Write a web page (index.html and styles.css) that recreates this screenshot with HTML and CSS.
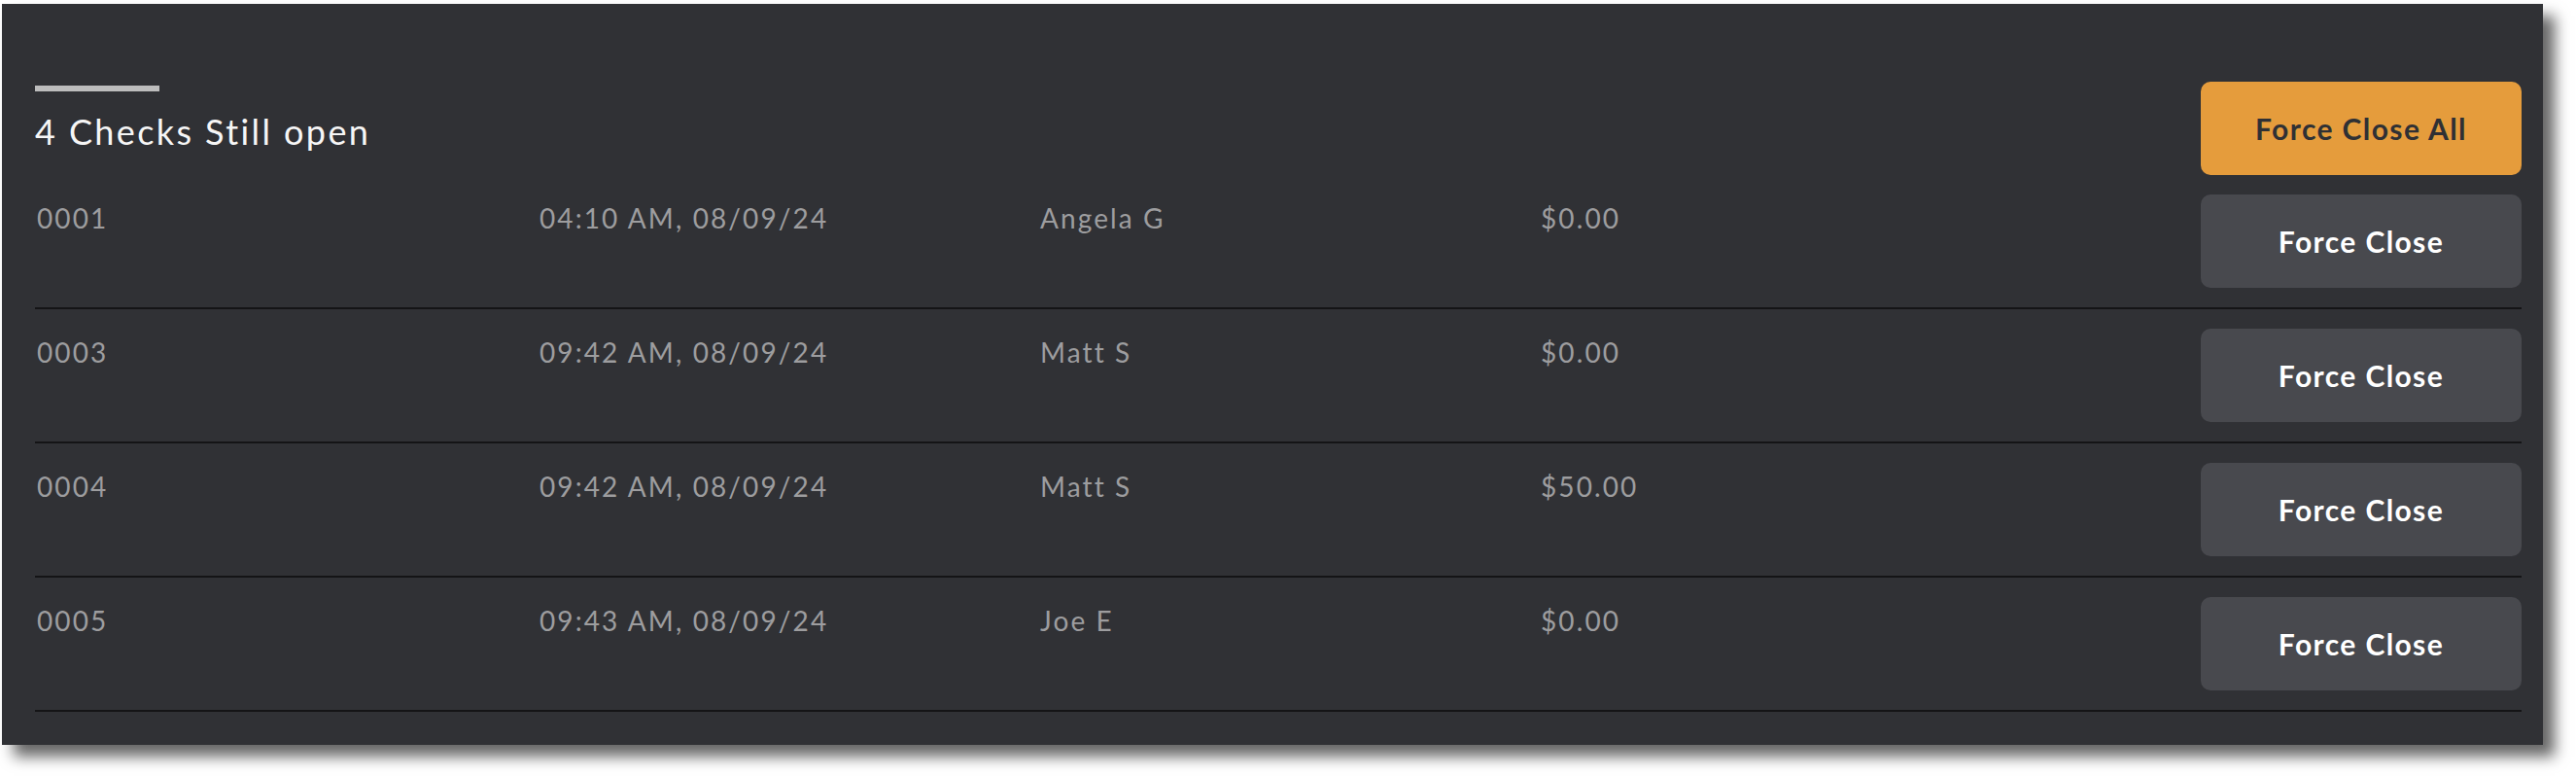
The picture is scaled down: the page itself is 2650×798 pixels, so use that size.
FILE: index.html
```html
<!DOCTYPE html>
<html lang="en">
<head>
<meta charset="utf-8">
<title>Checks Still open</title>
<link rel="stylesheet" href="styles.css">
</head>
<body>
<div class="panel">
  <div class="header">
    <div class="heading">
      <div class="grip"></div>
      <h1 class="title">4 Checks Still open</h1>
    </div>
    <button class="btn btn-primary">Force Close All</button>
  </div>
  <div class="rows">
    <div class="row">
      <span class="cell">0001</span>
      <span class="cell">04:10 AM, 08/09/24</span>
      <span class="cell">Angela G</span>
      <span class="cell">$0.00</span>
      <button class="btn btn-secondary">Force Close</button>
    </div>
    <div class="row">
      <span class="cell">0003</span>
      <span class="cell">09:42 AM, 08/09/24</span>
      <span class="cell">Matt S</span>
      <span class="cell">$0.00</span>
      <button class="btn btn-secondary">Force Close</button>
    </div>
    <div class="row">
      <span class="cell">0004</span>
      <span class="cell">09:42 AM, 08/09/24</span>
      <span class="cell">Matt S</span>
      <span class="cell">$50.00</span>
      <button class="btn btn-secondary">Force Close</button>
    </div>
    <div class="row">
      <span class="cell">0005</span>
      <span class="cell">09:43 AM, 08/09/24</span>
      <span class="cell">Joe E</span>
      <span class="cell">$0.00</span>
      <button class="btn btn-secondary">Force Close</button>
    </div>
  </div>
</div>
</body>
</html>
```
FILE: styles.css
```css
html, body {
  margin: 0;
  padding: 0;
  background: #ffffff;
}

body {
  min-height: 798px;
  font-family: "Lato", "Liberation Sans", sans-serif;
}

.panel {
  box-sizing: border-box;
  margin: 4px 0 0 2px;
  width: 2614px;
  height: 762px;
  padding: 80px 22px 0 34px;
  background: #303135;
  box-shadow: 12px 12px 14px rgba(0, 0, 0, 0.6);
}

.header {
  display: flex;
  justify-content: space-between;
  align-items: flex-start;
}

.heading {
  padding-top: 4px;
}

.grip {
  width: 128px;
  height: 6px;
  background: #bdbdbd;
}

.title {
  margin: 21px 0 0;
  font-size: 36px;
  font-weight: 400;
  line-height: 41px;
  letter-spacing: 2.4px;
  color: #f6f6f6;
}

.btn {
  box-sizing: border-box;
  width: 330px;
  height: 96px;
  border: none;
  border-radius: 10px;
  font-family: "Lato", "Liberation Sans", sans-serif;
  font-size: 30px;
  font-weight: 700;
  letter-spacing: 1.4px;
  cursor: pointer;
}

.btn-primary {
  background: #e59c3c;
  color: #2f3034;
}

.btn-secondary {
  background: #48494e;
  color: #ffffff;
}

.row {
  display: grid;
  grid-template-columns: 517px 515px 515px 1fr 330px;
  align-items: start;
  padding: 20px 0 20px 2px;
  border-bottom: 2px solid #141416;
}

.cell {
  padding-top: 7px;
  font-size: 28px;
  line-height: 34px;
  letter-spacing: 2.1px;
  color: #9d9d9f;
}
```
